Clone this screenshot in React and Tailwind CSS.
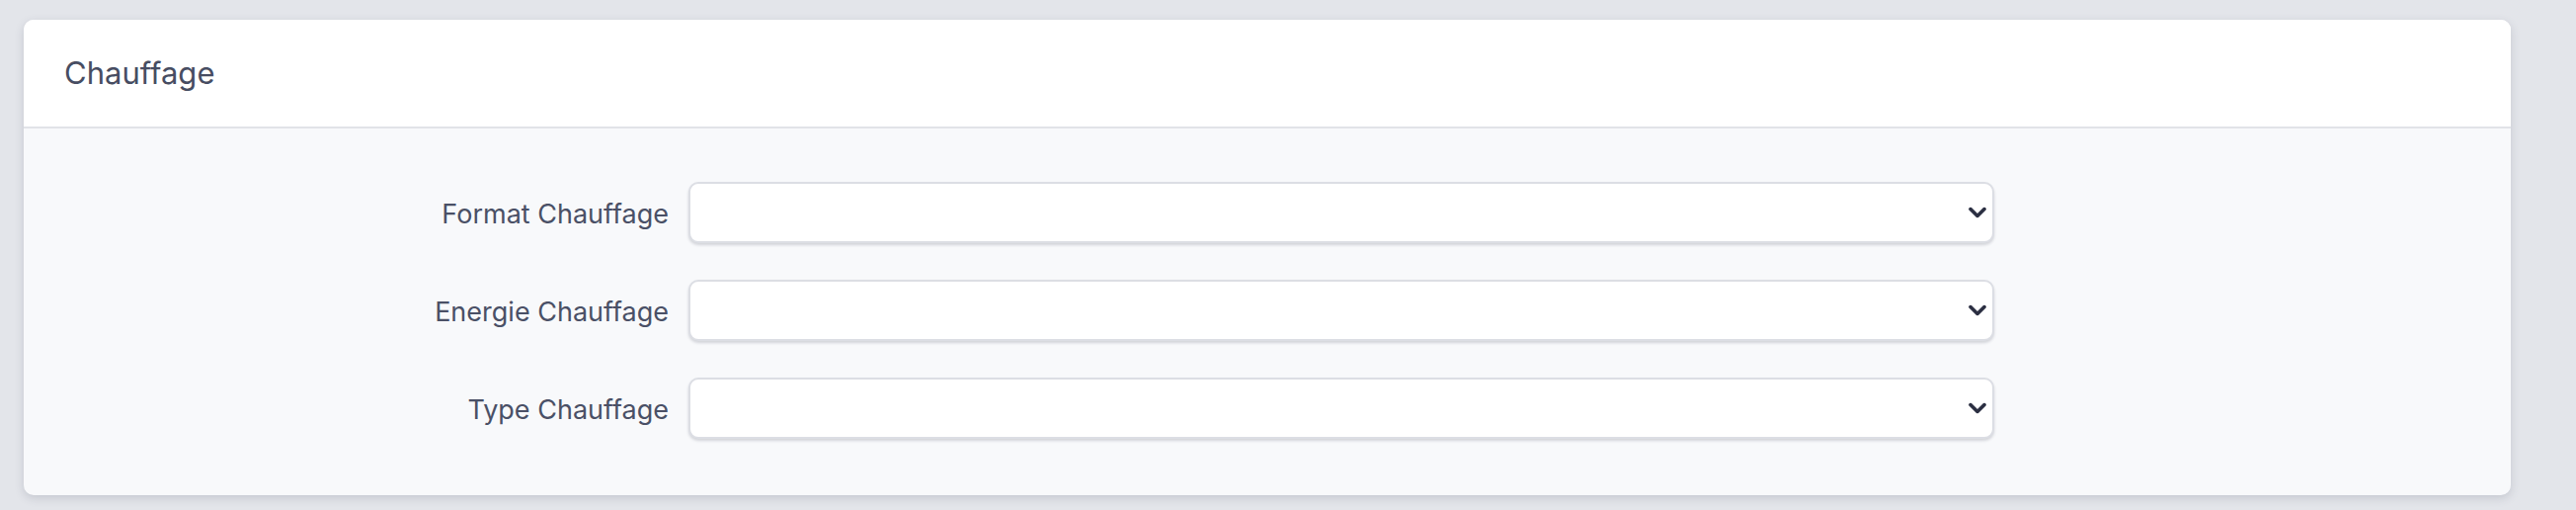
import { useState } from 'react'

const rows = [
  { id: 'format', label: 'Format Chauffage' },
  { id: 'energie', label: 'Energie Chauffage' },
  { id: 'type', label: 'Type Chauffage' },
]

function Chevron() {
  return (
    <svg viewBox="0 0 18 11" className="pointer-events-none absolute right-[8px] top-1/2 -translate-y-1/2 w-[18px] h-[11px]" fill="none" stroke="#2b2f42" strokeWidth="3.6" strokeLinecap="round" strokeLinejoin="round">
      <path d="M2 2l7 7 7-7" />
    </svg>
  )
}

export default function App() {
  const [values, setValues] = useState({ format: '', energie: '', type: '' })

  return (
    <div className="min-h-[516px] bg-[#e3e5ea] pt-[20px] pl-[24px]" style={{ fontFamily: 'Inter, "Noto Sans", sans-serif' }}>
      <div className="w-[2518px] rounded-[10px] overflow-hidden bg-[#f8f9fb] shadow-[0_3px_10px_rgba(60,66,87,0.18)]">
        <div className="h-[110px] bg-white border-b-2 border-[#e1e3e8] flex items-center px-[41px]">
          <h2 className="text-[31px] text-[#474d62] font-normal">Chauffage</h2>
        </div>
        <div className="pt-[54px] pb-[57px] flex flex-col gap-[37px]">
          {rows.map(r => (
            <div key={r.id} className="flex items-center gap-[20px]">
              <label htmlFor={r.id} className="w-[653px] mt-[5px] text-right text-[27px] text-[#4a5066]">{r.label}</label>
              <div className="relative w-[1322px] h-[62px]">
                <select
                  id={r.id}
                  value={values[r.id]}
                  onChange={e => setValues({ ...values, [r.id]: e.target.value })}
                  className="appearance-none w-full h-full bg-white rounded-[10px] border-2 border-[#dcdee4] shadow-[0_2px_3px_rgba(60,66,87,0.2)] outline-none"
                >
                  <option value=""></option>
                </select>
                <Chevron />
              </div>
            </div>
          ))}
        </div>
      </div>
    </div>
  )
}
